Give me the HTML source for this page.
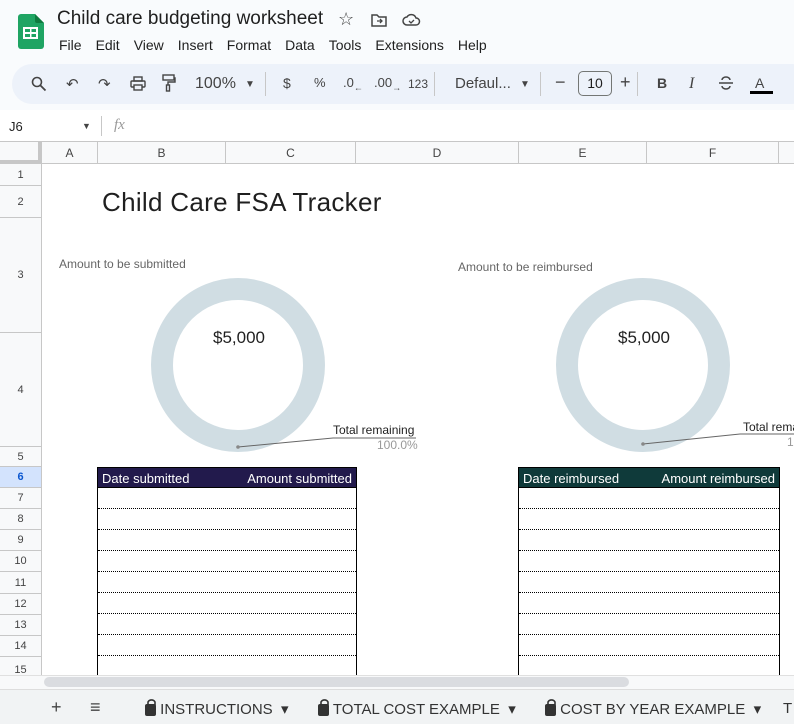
<!DOCTYPE html>
<html><head><style>
*{box-sizing:border-box;margin:0;padding:0}
body{width:794px;height:724px;overflow:hidden;background:#f9fbfd;font-family:"Liberation Sans",sans-serif;position:relative;color:#1f1f1f}
.a{position:absolute;white-space:nowrap}
.menu span{margin-right:14px}
.tb{position:absolute;top:64px;left:12px;width:800px;height:40px;background:#edf2fa;border-radius:20px}
.ti{position:absolute;top:75px;font-size:15px;color:#444}
.sep{position:absolute;top:72px;width:1px;height:24px;background:#c7c7c7}
.ch{position:absolute;top:142px;height:22px;font-size:12px;color:#444;text-align:center;line-height:22px;border-right:1px solid #c7c7c7;background:#f8f9fa;border-bottom:1px solid #c7c7c7}
.rh{position:absolute;left:0;width:42px;font-size:11px;color:#444;text-align:center;border-bottom:1px solid #c7c7c7;border-right:1px solid #c7c7c7;background:#f8f9fa;display:flex;align-items:center;justify-content:center}
.tbl{position:absolute;border-left:1px solid #000;border-right:1px solid #000}
.th{height:21px;color:#fff;font-size:13px;line-height:21px;display:flex;justify-content:space-between;padding:0 4px;border:1px solid #000}
.tr{height:21px;border-bottom:1px dotted #000}
</style></head><body>
<svg class="a" style="left:18px;top:14px" width="26" height="35" viewBox="0 0 26 35"><path d="M3 0h14l9 9v23a3 3 0 0 1-3 3H3a3 3 0 0 1-3-3V3a3 3 0 0 1 3-3z" fill="#1fa463"/><path d="M17 0l9 9h-7a2 2 0 0 1-2-2z" fill="#0f7a3f"/><rect x="5" y="13" width="15" height="12" fill="#fff"/><rect x="7" y="15" width="5" height="3" fill="#1fa463"/><rect x="13.5" y="15" width="4.5" height="3" fill="#1fa463"/><rect x="7" y="20" width="5" height="3" fill="#1fa463"/><rect x="13.5" y="20" width="4.5" height="3" fill="#1fa463"/></svg>
<div class="a" style="left:57px;top:8px;font-size:19px">Child care budgeting worksheet</div>
<div class="a" style="left:338px;top:9px;font-size:18px;color:#444">☆</div>
<svg class="a" style="left:371px;top:13px" width="16" height="14"><path d="M1 2h5l2 2h7v9H1z" fill="none" stroke="#444" stroke-width="1.5"/><path d="M6 8h5M9 6l2 2-2 2" stroke="#444" fill="none" stroke-width="1.3"/></svg>
<svg class="a" style="left:402px;top:13px" width="19" height="14"><path d="M5 12a4 4 0 0 1 0-8 5 5 0 0 1 9 1 3.5 3.5 0 0 1 0 7z" fill="none" stroke="#444" stroke-width="1.5"/><path d="M7 8l2 2 3-3" fill="none" stroke="#444" stroke-width="1.3"/></svg>
<div class="a menu" style="left:59px;top:37px;font-size:14px"><span>File</span><span>Edit</span><span>View</span><span>Insert</span><span>Format</span><span>Data</span><span>Tools</span><span>Extensions</span><span>Help</span></div>
<div class="tb"></div>
<svg class="a" style="left:31px;top:76px" width="16" height="16"><circle cx="6" cy="6" r="4.5" fill="none" stroke="#444" stroke-width="1.6"/><path d="M9.5 9.5l5 5" stroke="#444" stroke-width="1.8"/></svg>
<div class="ti" style="left:66px">↶</div><div class="ti" style="left:98px">↷</div>
<svg class="a" style="left:130px;top:76px" width="16" height="15"><rect x="4" y="1" width="8" height="4" fill="none" stroke="#444" stroke-width="1.4"/><rect x="1" y="5" width="14" height="6" rx="1" fill="none" stroke="#444" stroke-width="1.4"/><rect x="4" y="9" width="8" height="5" fill="#edf2fa" stroke="#444" stroke-width="1.4"/></svg>
<svg class="a" style="left:162px;top:74px" width="14" height="18"><rect x="1" y="1" width="11" height="5" fill="none" stroke="#444" stroke-width="1.4"/><path d="M12 4h1v4H6v3" fill="none" stroke="#444" stroke-width="1.4"/><rect x="4.5" y="11" width="3" height="6" fill="none" stroke="#444" stroke-width="1.4"/></svg>
<div class="ti" style="left:195px;font-size:16px">100%</div><div class="ti" style="left:245px;font-size:10px;top:79px">▼</div>
<div class="sep" style="left:265px"></div>
<div class="ti" style="left:283px;font-size:14px">$</div><div class="ti" style="left:314px;font-size:13px">%</div>
<div class="ti" style="left:343px;font-size:13px">.0<sub style="font-size:9px">←</sub></div>
<div class="ti" style="left:374px;font-size:13px">.00<sub style="font-size:9px">→</sub></div>
<div class="ti" style="left:408px;font-size:12px;top:77px">123</div>
<div class="sep" style="left:434px"></div>
<div class="ti" style="left:455px">Defaul...</div><div class="ti" style="left:520px;font-size:10px;top:79px">▼</div>
<div class="sep" style="left:540px"></div>
<div class="ti" style="left:555px;font-size:18px;top:72px">−</div>
<div class="a" style="left:578px;top:71px;width:34px;height:25px;border:1px solid #747775;border-radius:5px;text-align:center;line-height:23px;font-size:14px">10</div>
<div class="ti" style="left:620px;font-size:18px;top:72px">+</div>
<div class="sep" style="left:637px"></div>
<div class="ti" style="left:657px;font-weight:bold;font-size:14px">B</div>
<div class="ti" style="left:689px;font-style:italic;font-size:16px;font-family:'Liberation Serif'">I</div>
<svg class="a" style="left:718px;top:74px" width="16" height="18"><path d="M4 6a4 3 0 0 1 8 0M4 12a4 3 0 0 0 8 0" fill="none" stroke="#444" stroke-width="1.5"/><path d="M1 9h14" stroke="#444" stroke-width="1.5"/></svg>
<div class="ti" style="left:755px;font-size:14px">A</div><div class="a" style="left:750px;top:91px;width:23px;height:3px;background:#000"></div>
<div class="a" style="left:0;top:110px;width:794px;height:32px;background:#fff;border-bottom:1px solid #c7c7c7"></div>
<div class="a" style="left:9px;top:119px;font-size:13px">J6</div>
<div class="a" style="left:82px;top:121px;font-size:9px;color:#444">▼</div>
<div class="a" style="left:101px;top:116px;width:1px;height:20px;background:#c7c7c7"></div>
<div class="a" style="left:114px;top:117px;font-size:15px;font-style:italic;color:#999;font-family:'Liberation Serif'">fx</div>
<div class="a" style="left:0;top:142px;width:794px;height:540px;background:#fff"></div>
<div class="a" style="left:0;top:142px;width:42px;height:22px;background:#f8f9fa;border-right:4px solid #c7c7c7;border-bottom:4px solid #c7c7c7"></div>
<div class="ch" style="left:42px;width:56px">A</div>
<div class="ch" style="left:98px;width:128px">B</div>
<div class="ch" style="left:226px;width:130px">C</div>
<div class="ch" style="left:356px;width:163px">D</div>
<div class="ch" style="left:519px;width:128px">E</div>
<div class="ch" style="left:647px;width:132px">F</div>
<div class="ch" style="left:779px;width:20px"></div>
<div class="rh" style="top:164px;height:22px">1</div>
<div class="rh" style="top:186px;height:32px">2</div>
<div class="rh" style="top:218px;height:115px">3</div>
<div class="rh" style="top:333px;height:114px">4</div>
<div class="rh" style="top:447px;height:20px">5</div>
<div class="rh" style="top:467px;height:21px;background:#d3e3fd;font-weight:bold;color:#0b57d0">6</div>
<div class="rh" style="top:488px;height:21px">7</div>
<div class="rh" style="top:509px;height:21px">8</div>
<div class="rh" style="top:530px;height:21px">9</div>
<div class="rh" style="top:551px;height:21px">10</div>
<div class="rh" style="top:572px;height:22px">11</div>
<div class="rh" style="top:594px;height:21px">12</div>
<div class="rh" style="top:615px;height:21px">13</div>
<div class="rh" style="top:636px;height:21px">14</div>
<div class="rh" style="top:657px;height:25px;border-bottom:none">15</div>
<div class="a" style="left:102px;top:186px;font-size:26px;line-height:32px;letter-spacing:0.3px">Child Care FSA Tracker</div>
<div class="a" style="left:59px;top:257px;font-size:12px;color:#666">Amount to be submitted</div>
<div class="a" style="left:458px;top:260px;font-size:12px;color:#666">Amount to be reimbursed</div>
<svg class="a" style="left:0;top:0" width="794" height="724">
<circle cx="238" cy="365" r="76" fill="none" stroke="#d0dde3" stroke-width="22"/>
<circle cx="643" cy="365" r="76" fill="none" stroke="#d0dde3" stroke-width="22"/>
<path d="M238 447L333 438H416" stroke="#666" fill="none"/>
<circle cx="238" cy="447" r="1.8" fill="#888"/>
<path d="M643 444L740 434H794" stroke="#666" fill="none"/>
<circle cx="643" cy="444" r="1.8" fill="#888"/>
</svg>
<div class="a" style="left:213px;top:328px;font-size:17px">$5,000</div>
<div class="a" style="left:618px;top:328px;font-size:17px">$5,000</div>
<div class="a" style="left:333px;top:423px;font-size:12px">Total remaining</div>
<div class="a" style="left:377px;top:438px;font-size:12px;color:#999">100.0%</div>
<div class="a" style="left:743px;top:420px;font-size:12px">Total remaining</div>
<div class="a" style="left:787px;top:435px;font-size:12px;color:#999">100.0%</div>
<div class="tbl" style="left:97px;top:467px;width:260px;height:215px">
<div class="th" style="background:#221a4c;margin:0 -1px"><span>Date submitted</span><span>Amount submitted</span></div>
<div class="tr"></div><div class="tr"></div><div class="tr"></div><div class="tr"></div><div class="tr"></div><div class="tr"></div><div class="tr"></div><div class="tr"></div>
</div>
<div class="tbl" style="left:518px;top:467px;width:262px;height:215px">
<div class="th" style="background:#0f3a3a;margin:0 -1px"><span>Date reimbursed</span><span>Amount reimbursed</span></div>
<div class="tr"></div><div class="tr"></div><div class="tr"></div><div class="tr"></div><div class="tr"></div><div class="tr"></div><div class="tr"></div><div class="tr"></div>
</div>
<div class="a" style="left:0;top:675px;width:794px;height:14px;background:#f8f9fa;border-top:1px solid #e0e0e0"></div>
<div class="a" style="left:44px;top:677px;width:585px;height:10px;background:#dadce0;border-radius:5px"></div>
<div class="a" style="left:0;top:689px;width:794px;height:35px;background:#f1f3f4;border-top:1px solid #ddd"></div>
<div class="a" style="left:51px;top:697px;font-size:18px;color:#444">+</div>
<div class="a" style="left:90px;top:697px;font-size:18px;color:#444">≡</div>
<div class="a" style="left:145px;top:700px;font-size:15px;color:#333"><span style="display:inline-block;width:11px;height:12px;background:#333;border-radius:2px;vertical-align:-2px"></span> INSTRUCTIONS &nbsp;▾</div>
<div class="a" style="left:318px;top:700px;font-size:15px;color:#333"><span style="display:inline-block;width:11px;height:12px;background:#333;border-radius:2px;vertical-align:-2px"></span> TOTAL COST EXAMPLE &nbsp;▾</div>
<div class="a" style="left:545px;top:700px;font-size:15px;color:#333"><span style="display:inline-block;width:11px;height:12px;background:#333;border-radius:2px;vertical-align:-2px"></span> COST BY YEAR EXAMPLE &nbsp;▾</div>
<div class="a" style="left:783px;top:700px;font-size:15px;color:#333">T</div>
<svg class="a" style="left:0;top:0" width="794" height="724"><g fill="none" stroke="#333" stroke-width="1.6"><path d="M148 705v-3a4 4 0 0 1 7 0v3"/><path d="M321 705v-3a4 4 0 0 1 7 0v3"/><path d="M548 705v-3a4 4 0 0 1 7 0v3"/></g></svg>
</body></html>
